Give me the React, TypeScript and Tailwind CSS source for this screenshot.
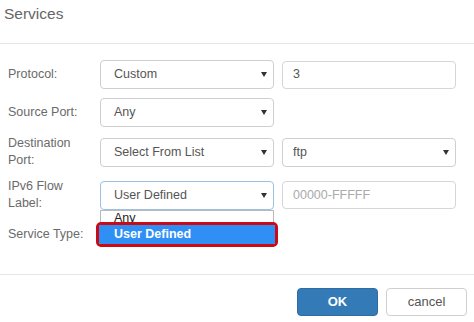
import React from "react";

const font = "font-['Liberation_Sans',Arial,sans-serif]";

function Arrow() {
  return (
    <span className="block w-0 h-0 border-x-[3px] border-x-transparent border-t-[5px] border-t-[#333]" />
  );
}

function Select({
  value,
  focused = false,
  className = "",
  children,
}: {
  value: string;
  focused?: boolean;
  className?: string;
  children?: React.ReactNode;
}) {
  return (
    <div
      className={`relative w-[174px] h-[29px] shrink-0 rounded-[4px] border bg-white flex items-center justify-between pl-[13px] pr-[6px] text-[12.5px] text-[#555] ${
        focused ? "border-[#9cc1e4]" : "border-[#cfcfcf]"
      } ${className}`}
    >
      <span>{value}</span>
      <Arrow />
      {children}
    </div>
  );
}

function Input({ value, placeholder = false }: { value: string; placeholder?: boolean }) {
  return (
    <div
      className={`w-[174px] h-[28px] shrink-0 rounded-[4px] border border-[#d6d6d6] bg-white flex items-center pl-[10px] text-[12.5px] ${
        placeholder ? "text-[#aaa]" : "text-[#555]"
      }`}
    >
      {value}
    </div>
  );
}

function Label({ children }: { children: React.ReactNode }) {
  return <div className="w-[84px] shrink-0 text-[12.5px] leading-[17px] text-[#6a6a6a]">{children}</div>;
}

export default function App() {
  return (
    <div className={`w-[474px] h-[322px] bg-white flex flex-col overflow-hidden ${font}`}>
      {/* Header */}
      <div className="h-[44px] shrink-0 border-b border-[#e6e6e6] px-[4px] pt-[4px]">
        <h1 className="text-[15.5px] font-medium text-[#666] leading-[20px]">Services</h1>
      </div>

      {/* Form */}
      <div className="flex-1 px-2 pt-4 flex flex-col">
        <div className="h-[29px] flex items-center gap-2">
          <Label>Protocol:</Label>
          <Select value="Custom" />
          <Input value="3" />
        </div>

        <div className="h-[29px] mt-[9px] flex items-center gap-2">
          <Label>Source Port:</Label>
          <Select value="Any" />
        </div>

        <div className="h-[34px] mt-[8px] flex items-center gap-2">
          <Label>
            Destination
            <br />
            Port:
          </Label>
          <Select value="Select From List" />
          <div className="w-[174px] h-[29px] shrink-0 rounded-[4px] border border-[#cfcfcf] bg-white flex items-center justify-between pl-[10px] pr-[6px] text-[12.5px] text-[#555]">
            <span>ftp</span>
            <Arrow />
          </div>
        </div>

        <div className="h-[34px] mt-[9px] flex items-center gap-2 relative z-10">
          <Label>
            IPv6 Flow
            <br />
            Label:
          </Label>
          <Select value="User Defined" focused>
            {/* open option list */}
            <div className="absolute left-[-1px] top-[28px] w-[174px] h-[37px] border border-[#b9b9b9] bg-white">
              <div className="pl-[13px] pt-[1px] text-[12.5px] leading-[13px] text-[#222]">Any</div>
            </div>
            <div className="absolute left-[-5px] top-[40px] w-[182px] h-[25px] border-[3px] border-[#cc0a14] rounded-[5px] bg-white p-0">
              <div className="h-full bg-[#2f8ff5] rounded-[1px] pl-[15px] flex items-center text-[12.5px] font-semibold text-white">
                User Defined
              </div>
            </div>
          </Select>
          <Input value="00000-FFFFF" placeholder />
        </div>

        <div className="h-[28px] mt-[8px] flex items-center gap-2">
          <Label>Service Type:</Label>
        </div>
      </div>

      {/* Footer */}
      <div className="h-[48px] shrink-0 border-t border-[#e6e6e6] flex justify-end items-start gap-2 pt-[13px] pr-[7px]">
        <button className="w-[81px] h-[28px] rounded-[4px] bg-[#337ab7] border border-[#2e6da4] text-white text-[13px] font-bold">
          OK
        </button>
        <button className="w-[81px] h-[28px] rounded-[4px] bg-white border border-[#cfcfcf] text-[#555] text-[13px]">
          cancel
        </button>
      </div>
    </div>
  );
}
